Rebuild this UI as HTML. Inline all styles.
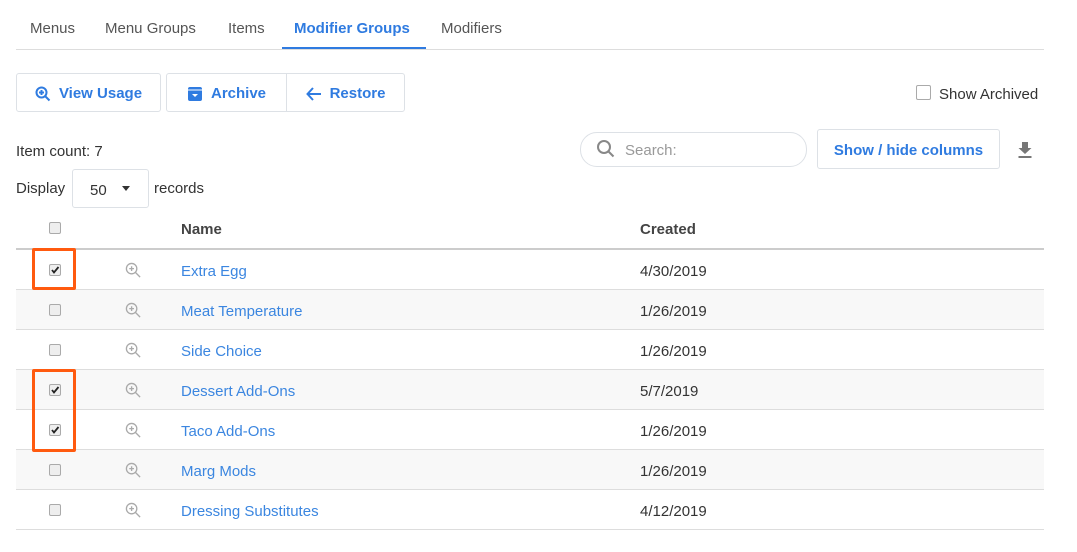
<!DOCTYPE html><html><head><style>
body{margin:0;width:1077px;height:552px;background:#fff;font-family:"Liberation Sans",sans-serif;color:#333;position:relative;overflow:hidden}
.a{position:absolute}
.tab{position:absolute;top:20px;font-size:15px;color:#555}
.btn{position:absolute;border:1px solid #dde1e6;border-radius:3px;height:39px;top:73px;color:#2f7be0;font-weight:bold;font-size:15px;display:flex;align-items:center;justify-content:center;gap:8px;box-sizing:border-box;padding-top:2px}
.row{position:absolute;left:16px;width:1028px;height:40px;border-bottom:1px solid #ddd;box-sizing:border-box}
.row.g{background:#f8f8f8}
.cb{position:absolute;left:33px;top:14px;width:10px;height:10px;border:1px solid #aaa;border-radius:2px;background:#eee}
.cb svg{position:absolute;left:0;top:0}
.mag{position:absolute;left:109px;top:12px}
.nm{position:absolute;left:165px;top:13px;font-size:15px;color:#3b86e0}
.dt{position:absolute;left:624px;top:13px;font-size:15px;color:#333}
.ob{position:absolute;border:3px solid #ff5a0f;left:32px;width:38px;border-radius:2px}
</style></head><body>
<div class="tab" style="left:30px">Menus</div>
<div class="tab" style="left:105px">Menu Groups</div>
<div class="tab" style="left:228px">Items</div>
<div class="tab" style="left:294px;color:#2f7be0;font-weight:bold">Modifier Groups</div>
<div class="tab" style="left:441px">Modifiers</div>
<div class="a" style="left:16px;top:49px;width:1028px;height:1px;background:#ddd"></div>
<div class="a" style="left:282px;top:47px;width:144px;height:2px;background:#2f7be0"></div>

<div class="btn" style="left:16px;width:145px"><svg width="16" height="16" viewBox="0 0 16 16"><circle cx="6.5" cy="6.5" r="5" fill="none" stroke="#2f7be0" stroke-width="2"/><path d="M10 10l4.5 4.5M6.5 4v5M4 6.5h5" stroke="#2f7be0" stroke-width="2"/></svg>View Usage</div>
<div class="btn" style="left:166px;width:121px;border-radius:3px 0 0 3px"><svg width="16" height="16" viewBox="0 0 16 16"><rect x="1" y="1" width="14" height="14" rx="2" fill="#2f7be0"/><path d="M1 4h14" stroke="#fff"/><path d="M5 8h6l-3 3z" fill="#fff"/></svg>Archive</div>
<div class="btn" style="left:286px;width:119px;border-radius:0 3px 3px 0"><svg width="16" height="14" viewBox="0 0 16 14"><path d="M15 7H2M7 1L1.5 7 7 13" fill="none" stroke="#2f7be0" stroke-width="2"/></svg>Restore</div>

<div class="a" style="left:916px;top:85px;width:13px;height:13px;border:1px solid #aaa;border-radius:2px"></div>
<div class="a" style="left:939px;top:86px;font-size:15px;color:#333">Show Archived</div>

<div class="a" style="left:16px;top:143px;font-size:15px">Item count: 7</div>
<div class="a" style="left:16px;top:180px;font-size:15px">Display</div>
<div class="a" style="left:72px;top:169px;width:77px;height:39px;border:1px solid #dde1e6;border-radius:3px;box-sizing:border-box"><span class="a" style="left:17px;top:12px;font-size:15px">50</span><span class="a" style="left:49px;top:16px;border:4px solid transparent;border-top:5px solid #333"></span></div>
<div class="a" style="left:154px;top:180px;font-size:15px">records</div>

<div class="a" style="left:580px;top:132px;width:227px;height:35px;border:1px solid #dde1e6;border-radius:17px;box-sizing:border-box"><svg class="a" style="left:15px;top:6px" width="20" height="20" viewBox="0 0 20 20"><circle cx="8" cy="8" r="6" fill="none" stroke="#888" stroke-width="2"/><path d="M12.5 12.5l5 5" stroke="#888" stroke-width="2"/></svg><span class="a" style="left:44px;top:9px;font-size:15px;color:#999">Search:</span></div>
<div class="btn" style="left:817px;top:129px;width:183px;height:40px">Show / hide columns</div>
<svg class="a" style="left:1018px;top:142px" width="14" height="16" viewBox="0 0 14 16"><path d="M4 0h6v6h3.5L7 12 0.5 6H4z M0.5 14h13v2H0.5z" fill="#777"/></svg>

<div class="a" style="left:49px;top:222px;width:10px;height:10px;border:1px solid #aaa;border-radius:2px;background:#eee"></div>
<div class="a" style="left:181px;top:221px;font-size:15px;font-weight:bold;color:#444">Name</div>
<div class="a" style="left:640px;top:221px;font-size:15px;font-weight:bold;color:#444">Created</div>
<div class="a" style="left:16px;top:248px;width:1028px;height:2px;background:#ccc"></div>

<div class="row" style="top:250px"><div class="cb"><svg width="10" height="10" viewBox="0 0 10 10"><path d="M2 5l2 2.5L8.5 2" fill="none" stroke="#222" stroke-width="1.8"/></svg></div><svg class="mag" width="17" height="17" viewBox="0 0 18 18"><circle cx="7" cy="7" r="5.5" fill="none" stroke="#aaa" stroke-width="1.4"/><path d="M11 11l5 5M7 4.5v5M4.5 7h5" stroke="#aaa" stroke-width="1.4"/></svg><div class="nm">Extra Egg</div><div class="dt">4/30/2019</div></div>
<div class="row g" style="top:290px"><div class="cb"></div><svg class="mag" width="17" height="17" viewBox="0 0 18 18"><circle cx="7" cy="7" r="5.5" fill="none" stroke="#aaa" stroke-width="1.4"/><path d="M11 11l5 5M7 4.5v5M4.5 7h5" stroke="#aaa" stroke-width="1.4"/></svg><div class="nm">Meat Temperature</div><div class="dt">1/26/2019</div></div>
<div class="row" style="top:330px"><div class="cb"></div><svg class="mag" width="17" height="17" viewBox="0 0 18 18"><circle cx="7" cy="7" r="5.5" fill="none" stroke="#aaa" stroke-width="1.4"/><path d="M11 11l5 5M7 4.5v5M4.5 7h5" stroke="#aaa" stroke-width="1.4"/></svg><div class="nm">Side Choice</div><div class="dt">1/26/2019</div></div>
<div class="row g" style="top:370px"><div class="cb"><svg width="10" height="10" viewBox="0 0 10 10"><path d="M2 5l2 2.5L8.5 2" fill="none" stroke="#222" stroke-width="1.8"/></svg></div><svg class="mag" width="17" height="17" viewBox="0 0 18 18"><circle cx="7" cy="7" r="5.5" fill="none" stroke="#aaa" stroke-width="1.4"/><path d="M11 11l5 5M7 4.5v5M4.5 7h5" stroke="#aaa" stroke-width="1.4"/></svg><div class="nm">Dessert Add-Ons</div><div class="dt">5/7/2019</div></div>
<div class="row" style="top:410px"><div class="cb"><svg width="10" height="10" viewBox="0 0 10 10"><path d="M2 5l2 2.5L8.5 2" fill="none" stroke="#222" stroke-width="1.8"/></svg></div><svg class="mag" width="17" height="17" viewBox="0 0 18 18"><circle cx="7" cy="7" r="5.5" fill="none" stroke="#aaa" stroke-width="1.4"/><path d="M11 11l5 5M7 4.5v5M4.5 7h5" stroke="#aaa" stroke-width="1.4"/></svg><div class="nm">Taco Add-Ons</div><div class="dt">1/26/2019</div></div>
<div class="row g" style="top:450px"><div class="cb"></div><svg class="mag" width="17" height="17" viewBox="0 0 18 18"><circle cx="7" cy="7" r="5.5" fill="none" stroke="#aaa" stroke-width="1.4"/><path d="M11 11l5 5M7 4.5v5M4.5 7h5" stroke="#aaa" stroke-width="1.4"/></svg><div class="nm">Marg Mods</div><div class="dt">1/26/2019</div></div>
<div class="row" style="top:490px"><div class="cb"></div><svg class="mag" width="17" height="17" viewBox="0 0 18 18"><circle cx="7" cy="7" r="5.5" fill="none" stroke="#aaa" stroke-width="1.4"/><path d="M11 11l5 5M7 4.5v5M4.5 7h5" stroke="#aaa" stroke-width="1.4"/></svg><div class="nm">Dressing Substitutes</div><div class="dt">4/12/2019</div></div>

<div class="ob" style="top:248px;height:36px"></div>
<div class="ob" style="top:369px;height:77px"></div>
</body></html>
